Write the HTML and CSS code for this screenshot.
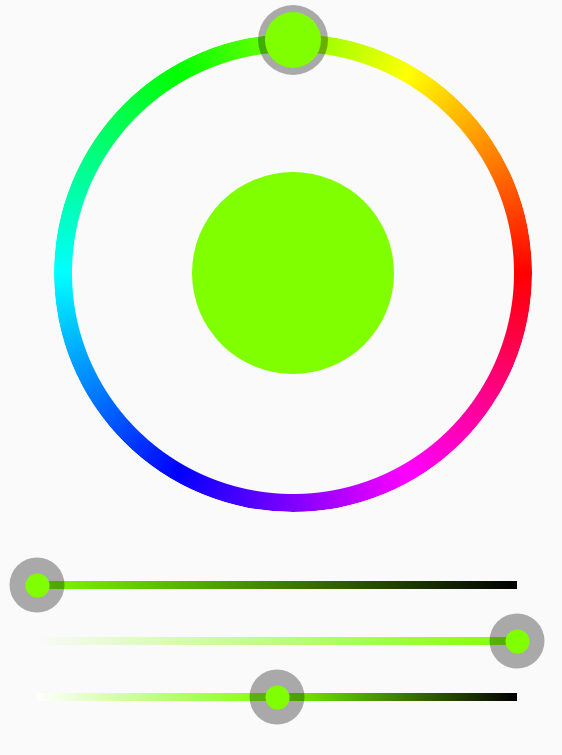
FILE: index.html
```html
<!DOCTYPE html>
<html>
<head>
<meta charset="utf-8">
<link rel="stylesheet" href="styles.css">
</head>
<body>
<div class="picker">
  <div class="wheel">
    <div class="ring"></div>
    <div class="swatch"></div>
    <div class="wheel-thumb"><span class="dot"></span></div>
  </div>
  <div class="sliders">
    <div class="slider">
      <div class="track track-sat"></div>
      <div class="thumb" style="left:0%"><span class="knob"></span></div>
    </div>
    <div class="slider">
      <div class="track track-alpha"></div>
      <div class="thumb" style="left:100%"><span class="knob"></span></div>
    </div>
    <div class="slider">
      <div class="track track-light"></div>
      <div class="thumb" style="left:50%"><span class="knob"></span></div>
    </div>
  </div>
</div>
</body>
</html>
```
FILE: styles.css
```css
html, body {
  margin: 0;
  padding: 0;
  background: #fafafa;
  width: 562px;
  height: 755px;
  overflow: hidden;
}
.picker {
  display: flex;
  flex-direction: column;
  padding-top: 34px;
}
.wheel {
  position: relative;
  width: 478px;
  height: 478px;
  margin-left: 54px;
  display: grid;
  place-items: center;
}
.ring {
  position: absolute;
  inset: 0;
  border-radius: 50%;
  background: conic-gradient(#80ff00 0deg, #ffff00 30deg, #ff0000 90deg, #ff00ff 150deg, #0000ff 210deg, #00ffff 270deg, #00ff00 330deg, #80ff00 360deg);
  -webkit-mask: radial-gradient(circle closest-side, transparent 220.5px, #000 221.5px);
  mask: radial-gradient(circle closest-side, transparent 220.5px, #000 221.5px);
}
.swatch {
  width: 202px;
  height: 202px;
  border-radius: 50%;
  background: #80ff00;
  position: relative;
}
.wheel-thumb {
  position: absolute;
  left: 239px;
  top: 6px;
  width: 70px;
  height: 70px;
  transform: translate(-50%, -50%);
  border-radius: 50%;
  background: rgba(0, 0, 0, 0.32);
  display: grid;
  place-items: center;
}
.dot {
  width: 56px;
  height: 56px;
  border-radius: 50%;
  background: #80ff00;
}
.sliders {
  display: flex;
  flex-direction: column;
  margin-top: 45px;
  padding-left: 37px;
}
.slider {
  position: relative;
  width: 480px;
  height: 56px;
  display: flex;
  align-items: center;
}
.track {
  width: 100%;
  height: 8px;
}
.track-sat {
  background: linear-gradient(to right, #80ff00, #000000);
}
.track-alpha {
  background: linear-gradient(to right, rgba(128, 255, 0, 0), #80ff00);
}
.track-light {
  background: linear-gradient(to right, #ffffff, #80ff00 50%, #000000);
}
.thumb {
  position: absolute;
  top: 50%;
  width: 55px;
  height: 55px;
  transform: translate(-50%, -50%);
  border-radius: 50%;
  background: rgba(0, 0, 0, 0.32);
  display: grid;
  place-items: center;
}
.knob {
  width: 24px;
  height: 24px;
  border-radius: 50%;
  background: #80ff00;
}
```
